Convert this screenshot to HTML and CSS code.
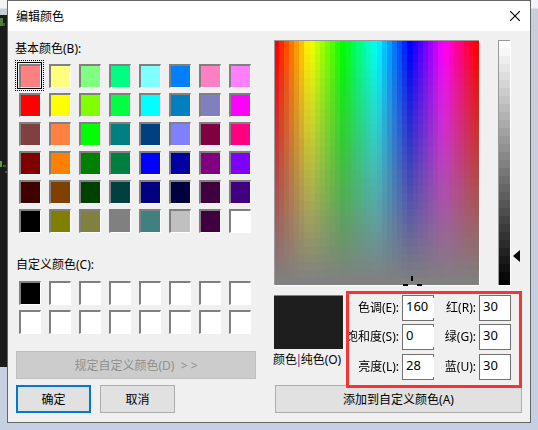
FILE: index.html
```html
<!DOCTYPE html>
<html lang="zh-CN">
<head>
    <meta charset="UTF-8">
    <meta name="viewport" content="width=device-width, initial-scale=1.0">
    <title>编辑颜色</title>

    <link rel="stylesheet" href="styles.css">
</head>
<body>

    <!-- Desktop behind the dialog -->
    <div class="terminal">
        <svg class="terminal-pixels" width="7" height="352" viewBox="0 0 7 352">
            <rect x="0" y="3" width="3" height="8" fill="#4f7d3c"/>
            <rect x="3" y="8" width="2" height="3" fill="#3c5f30"/>
            <rect x="0" y="146" width="2" height="6" fill="#5f9a48"/>
            <rect x="3" y="150" width="3" height="2" fill="#3c5f30"/>
            <rect x="5" y="156" width="2" height="2" fill="#3c5f30"/>
        </svg>
    </div>

    <div class="dialog">
        <div class="titlebar">
            <span>编辑颜色</span>
            <svg class="close" width="10" height="10" viewBox="0 0 10 10">
                <path d="M0 0L10 10M10 0L0 10" stroke="#000" stroke-width="1.1"/>
            </svg>
        </div>

        <div class="dialog-body">
            <div class="left-col">
                <p class="label basic-label">基本颜色(B):</p>
                <div class="swatches basic-swatches" id="basicColors"></div>

                <p class="label">自定义颜色(C):</p>
                <div class="swatches custom-swatches" id="customColors"></div>

                <button class="btn btn-disabled">规定自定义颜色(D)&nbsp; &gt; &gt;</button>
                <div class="btn-row">
                    <button class="btn btn-default">确定</button>
                    <button class="btn">取消</button>
                </div>
            </div>

            <div class="right-col">
                <div class="picker-row">
                    <div class="spectrum">
                        <canvas id="spectrum" width="206" height="246"></canvas>
                        <span class="cross cross-top"></span>
                        <span class="cross cross-left"></span>
                        <span class="cross cross-right"></span>
                    </div>
                    <canvas class="lum-bar" id="lumBar" width="13" height="246"></canvas>
                    <span class="lum-arrow"></span>
                </div>

                <div class="values-row">
                    <div class="preview-col">
                        <div class="preview"></div>
                        <div class="preview-label">颜色<i>|</i>纯色(O)</div>
                    </div>

                    <div class="fields">
                        <label>色调(E):</label>
                        <div class="field field-open">160</div>
                        <label>红(R):</label>
                        <div class="field">30</div>

                        <label>饱和度(S):</label>
                        <div class="field field-open">0</div>
                        <label>绿(G):</label>
                        <div class="field">30</div>

                        <label>亮度(L):</label>
                        <div class="field field-open">28</div>
                        <label>蓝(U):</label>
                        <div class="field">30</div>

                        <div class="highlight"></div>
                    </div>
                </div>

                <button class="btn btn-add">添加到自定义颜色(A)</button>
            </div>
        </div>
    </div>

    <script src="app.js"></script>
</body>
</html>
```

FILE: styles.css
```css
html, body {
    height: 100%;
}
body {
    margin: 0;
    overflow: hidden;
    position: relative;
    font-family: "Noto Sans", "Noto Sans CJK SC", sans-serif;
    font-size: 12px;
    color: #000;
    background: linear-gradient(#f4f4f4 0, #f4f4f4 8px, #c9cfd9 9px, #c5d0e2 100%);
}

/* Desktop */
.terminal {
    position: absolute;
    left: 0;
    top: 15px;
    width: 7px;
    height: 352px;
    background: #1b1b1b;
}
.terminal-pixels {
    display: block;
}

/* Dialog window */
.dialog {
    position: absolute;
    left: 7px;
    top: 0;
    width: 522px;
    height: 421px;
    border: 1px solid #666;
    background: #f0f0f0;
}
.titlebar {
    height: 30px;
    padding-left: 8px;
    background: #fff;
    display: flex;
    align-items: center;
    justify-content: space-between;
}
.close {
    margin-right: 10px;
}
.dialog-body {
    display: flex;
    padding-left: 8px;
}

/* Left column */
.left-col {
    width: 240px;
}
.label {
    margin: 0 0 8px;
    height: 16px;
    line-height: 16px;
}
.basic-label {
    margin-top: 10px;
    margin-bottom: 7px;
    margin-left: -1px;
}
.swatches {
    display: grid;
    grid-template-columns: repeat(8, 22px);
    grid-auto-rows: 24px;
    column-gap: 8px;
    row-gap: 5px;
    padding-left: 3px;
}
.basic-swatches {
    margin-bottom: 24px;
}
.custom-swatches {
    margin-bottom: 17px;
}
.swatch {
    position: relative;
    box-sizing: border-box;
    border-top: 2px solid #808080;
    border-left: 2px solid #808080;
    border-right: 1px solid #fff;
    border-bottom: 1px solid #fff;
}
.swatch.selected::after {
    content: "";
    position: absolute;
    left: -4px;
    top: -4px;
    width: 25px;
    height: 27px;
    border: 1px solid #000;
    outline: 1px dotted #000;
    outline-offset: 1px;
    box-sizing: border-box;
}

/* Buttons */
.btn {
    display: block;
    box-sizing: border-box;
    width: 75px;
    height: 28px;
    padding: 0;
    border: 1px solid #adadad;
    background: #e1e1e1;
    color: #000;
    font-family: inherit;
    font-size: 12px;
}
.btn-disabled {
    width: 240px;
    margin-bottom: 6px;
    background: #cccccc;
    border-color: #bfbfbf;
    color: #8f8f8f;
}
.btn-row {
    display: flex;
    gap: 9px;
}
.btn-default {
    border: 2px solid #0078d7;
}
.btn-add {
    width: 247px;
    margin-left: 1px;
    margin-top: 5px;
}

/* Right column */
.right-col {
    width: 248px;
    margin-left: 18px;
    padding-top: 9px;
}
.picker-row {
    position: relative;
    display: flex;
    gap: 18px;
    height: 246px;
}
.spectrum {
    position: relative;
    width: 206px;
    height: 246px;
    overflow: hidden;
}
.spectrum canvas, .lum-bar {
    display: block;
}
.cross {
    position: absolute;
    background: #000;
}
.cross-top {
    left: 137px;
    top: 236px;
    width: 2px;
    height: 5px;
}
.cross-left {
    left: 129px;
    top: 244px;
    width: 5px;
    height: 2px;
}
.cross-right {
    left: 143px;
    top: 244px;
    width: 5px;
    height: 2px;
}
.lum-arrow {
    position: absolute;
    left: 239px;
    top: 210px;
    width: 0;
    height: 0;
    border-top: 6px solid transparent;
    border-bottom: 6px solid transparent;
    border-right: 7px solid #000;
}
.values-row {
    display: flex;
    margin-top: 9px;
    height: 85px;
}
.preview-col {
    width: 69px;
}
.preview {
    box-sizing: border-box;
    height: 54px;
    background: #1e1e1e;
    border-top: 1px solid #808080;
}
.preview-label {
    margin-top: 3px;
    line-height: 16px;
    white-space: nowrap;
    margin-left: -1px;
}
.preview-label i {
    font-style: normal;
    color: #6a1b7a;
    margin: 0 -1.5px;
}

/* Value fields */
.fields {
    position: relative;
    margin-left: 6px;
    display: grid;
    grid-template-columns: 53px 32px 45px 32px;
    grid-template-rows: 26px 27px 26px;
    row-gap: 3px;
    align-items: start;
}
.fields label {
    display: flex;
    justify-content: flex-end;
    height: 26px;
    line-height: 26px;
    white-space: nowrap;
    overflow: hidden;
    padding-right: 3px;
}
.field {
    box-sizing: border-box;
    height: 26px;
    padding-left: 3px;
    line-height: 21px;
    font-size: 13px;
    background: #fff;
    border: 1px solid #707070;
}
.field-open {
    border-right: none;
    background:
        linear-gradient(#707070, #707070) right top / 1px 2px no-repeat,
        linear-gradient(#707070, #707070) right bottom / 1px 2px no-repeat,
        #fff;
}

/* Red annotation drawn over the dialog */
.highlight {
    position: absolute;
    left: -3px;
    top: -4px;
    width: 170px;
    height: 91px;
    border: 3px solid #f33535;
}
```

FILE: app.js
```js
var basicColors = [
    "#ff8080", "#ffff80", "#80ff80", "#00ff80", "#80ffff", "#0080ff", "#ff80c0", "#ff80ff",
    "#ff0000", "#ffff00", "#80ff00", "#00ff40", "#00ffff", "#0080c0", "#8080c0", "#ff00ff",
    "#804040", "#ff8040", "#00ff00", "#008080", "#004080", "#8080ff", "#800040", "#ff0080",
    "#800000", "#ff8000", "#008000", "#008040", "#0000ff", "#0000a0", "#800080", "#8000ff",
    "#400000", "#804000", "#004000", "#004040", "#000080", "#000040", "#400040", "#400080",
    "#000000", "#808000", "#808040", "#808080", "#408080", "#c0c0c0", "#400040", "#ffffff"
];

function addSwatches(containerId, colors) {
    var container = document.getElementById(containerId);
    colors.forEach(function (color) {
        var swatch = document.createElement("div");
        swatch.className = "swatch";
        swatch.style.background = color;
        container.appendChild(swatch);
    });
}

addSwatches("basicColors", basicColors);
document.querySelector("#basicColors .swatch").classList.add("selected");

var customColors = ["#000000"];
for (var i = 1; i < 16; i++) {
    customColors.push("#ffffff");
}
addSwatches("customColors", customColors);

// Hue across, saturation down, in coarse cells like the native control
var spectrum = document.getElementById("spectrum").getContext("2d");
var cellW = 206 / 40;
var cellH = 246 / 32;
for (var x = 0; x < 40; x++) {
    for (var y = 0; y < 32; y++) {
        var hue = x / 39 * 360;
        var sat = 100 - y / 31 * 100;
        spectrum.fillStyle = "hsl(" + hue + "," + sat + "%,50%)";
        spectrum.fillRect(Math.floor(x * cellW), Math.floor(y * cellH), Math.ceil(cellW), Math.ceil(cellH));
    }
}
spectrum.fillStyle = "#999";
spectrum.fillRect(0, 0, 206, 1);
spectrum.fillRect(0, 0, 1, 246);
spectrum.fillStyle = "#fff";
spectrum.fillRect(0, 245, 206, 1);
spectrum.fillRect(205, 0, 1, 246);

// Luminosity bar
var lum = document.getElementById("lumBar").getContext("2d");
for (var b = 0; b < 31; b++) {
    var grey = Math.round(255 - b / 30 * 255);
    lum.fillStyle = "rgb(" + grey + "," + grey + "," + grey + ")";
    lum.fillRect(0, b * 8, 13, 8);
}
lum.fillStyle = "#999";
lum.fillRect(0, 0, 13, 1);
lum.fillRect(0, 0, 1, 246);
lum.fillStyle = "#fff";
lum.fillRect(12, 0, 1, 246);
lum.fillRect(0, 245, 13, 1);
```
